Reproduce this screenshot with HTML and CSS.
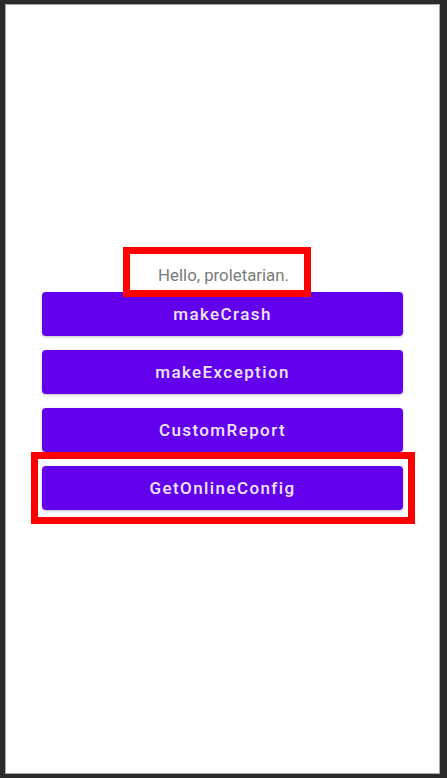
FILE: index.html
```html
<!DOCTYPE html>
<html>
<head>
<meta charset="utf-8">
<link rel="stylesheet" href="styles.css">
</head>
<body>
<div class="frame">
  <div class="screen">
    <p class="greeting">Hello, proletarian.</p>
    <div class="buttons">
      <button class="btn">makeCrash</button>
      <button class="btn">makeException</button>
      <button class="btn">CustomReport</button>
      <button class="btn">GetOnlineConfig</button>
    </div>
    <div class="mark mark-text"></div>
    <div class="mark mark-btn"></div>
  </div>
</div>
</body>
</html>
```
FILE: styles.css
```css
* { box-sizing: border-box; }
html, body {
  margin: 0;
  padding: 0;
  width: 447px;
  height: 778px;
  background: #2a2a2a;
  overflow: hidden;
}
.frame {
  padding: 4px 7px 4px 5px;
  height: 778px;
}
.screen {
  position: relative;
  width: 435px;
  height: 770px;
  background: #ffffff;
  border: 1px solid #a8a8a8;
  padding: 259px 36px 0 36px;
  font-family: Roboto, "Noto Sans", sans-serif;
}
.greeting {
  margin: 0;
  height: 22px;
  line-height: 22px;
  font-size: 16.8px;
  color: #7a7a7a;
  text-align: center;
  padding-left: 2px;
}
.buttons {
  margin-top: 6px;
  display: flex;
  flex-direction: column;
  gap: 14px;
}
.btn {
  height: 44px;
  width: 100%;
  border: none;
  border-radius: 4px;
  background: #6200ee;
  color: #efe6ff;
  font-family: Roboto, "Noto Sans", sans-serif;
  font-weight: 500;
  font-size: 17px;
  letter-spacing: 1.4px;
  box-shadow: 0 1px 3px rgba(0,0,0,0.25);
  padding: 0;
}
.mark {
  position: absolute;
  border: 7px solid #ff0000;
}
.mark-text {
  left: 117px;
  top: 242px;
  width: 188px;
  height: 50px;
}
.mark-btn {
  left: 25px;
  top: 447px;
  width: 384px;
  height: 72px;
}
```
